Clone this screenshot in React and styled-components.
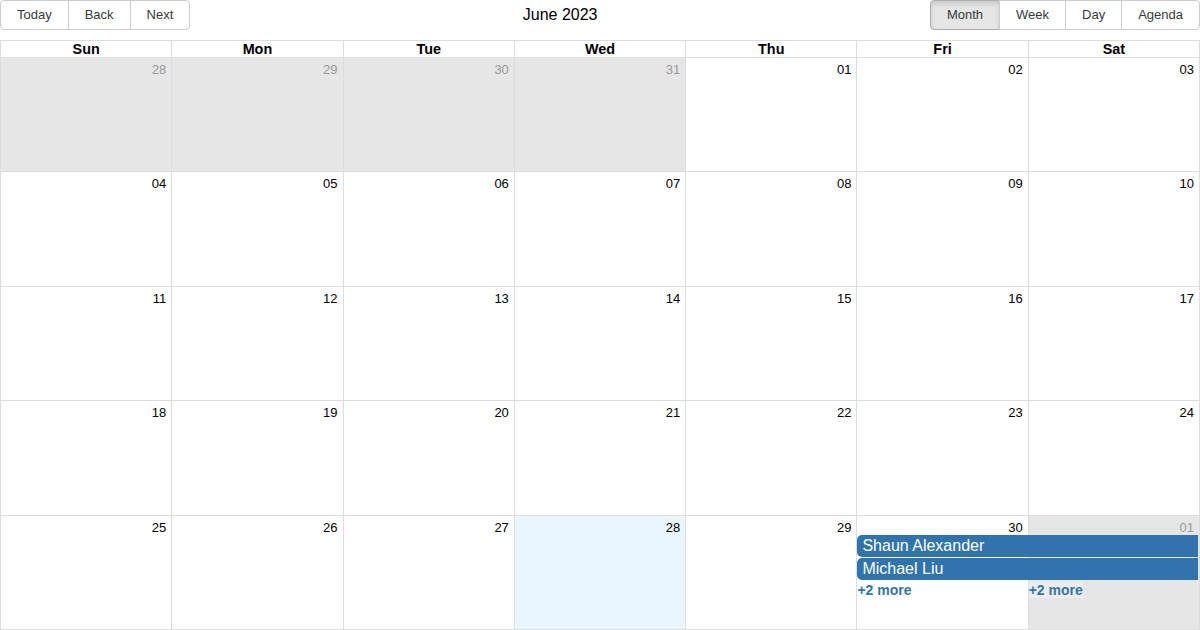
import React from "react";
import styled, { createGlobalStyle, css } from "styled-components";

const GlobalStyle = createGlobalStyle`
  html, body {
    margin: 0;
    padding: 0;
    background: #fff;
  }
  body {
    font-family: "Liberation Sans", Arial, Helvetica, sans-serif;
    font-size: 16px;
  }
  * { box-sizing: border-box; }
`;

const COLS = "calc((100% - 6px) / 7) repeat(6, calc((100% - 6px) / 7 + 1px))";

const Calendar = styled.div`
  height: 630px;
  display: flex;
  flex-direction: column;
  color: #000;
`;

const Toolbar = styled.div`
  display: flex;
  align-items: center;
  justify-content: center;
  margin-bottom: 10px;
  font-size: 16px;
`;

const ButtonGroup = styled.span`
  display: inline-block;
  white-space: nowrap;
`;

const ToolButton = styled.button`
  font-family: inherit;
  font-size: 13px;
  color: #373a3c;
  display: inline-block;
  margin: 0;
  text-align: center;
  vertical-align: middle;
  background: none;
  border: 1px solid #ccc;
  padding: 6px 16px;
  line-height: 16px;
  white-space: nowrap;
  border-radius: 0;
  cursor: pointer;

  & + & { margin-left: -1px; }
  &:first-child { border-radius: 4px 0 0 4px; }
  &:last-child { border-radius: 0 4px 4px 0; }

  ${(p) =>
    p.$active &&
    css`
      background-color: #e6e6e6;
      border-color: #adadad;
      box-shadow: inset 0 3px 5px rgba(0, 0, 0, 0.125);
    `}
`;

const Label = styled.span`
  flex-grow: 1;
  padding: 0 10px;
  text-align: center;
`;

const MonthView = styled.div`
  flex: 1;
  display: flex;
  flex-direction: column;
  border: 1px solid #ddd;
`;

const HeaderRow = styled.div`
  display: grid;
  grid-template-columns: ${COLS};
  border-bottom: 1px solid #ddd;
`;

const HeaderCell = styled.div`
  padding: 0 3px;
  text-align: center;
  font-weight: bold;
  font-size: 90%;
  line-height: 16px;
  white-space: nowrap;
  & + & { border-left: 1px solid #ddd; }
`;

const Week = styled.div`
  flex: 1 0 0;
  display: grid;
  grid-template-columns: ${COLS};
  grid-template-rows: auto auto auto auto 1fr;
  & + & { border-top: 1px solid #ddd; }
`;

const DayBg = styled.div`
  grid-row: 1 / -1;
  grid-column: ${(p) => p.$col};
  background: ${(p) => (p.$off ? "#e6e6e6" : p.$today ? "#eaf6ff" : "transparent")};
  border-left: ${(p) => (p.$col > 1 ? "1px solid #ddd" : "none")};
`;

const DateCell = styled.div`
  grid-row: 1;
  grid-column: ${(p) => p.$col};
  padding: 4px 5px 0 0;
  text-align: right;
  font-size: 13px;
  line-height: 15px;
  color: ${(p) => (p.$off ? "#999" : "#000")};
`;

const Segment = styled.div`
  grid-row: ${(p) => p.$row};
  grid-column: ${(p) => p.$col} / span ${(p) => p.$span || 1};
  padding: 0 1px 1px 1px;
  min-width: 0;
`;

const Event = styled.div`
  background: #3174ad;
  color: #fff;
  border-radius: ${(p) => (p.$continues ? "5px 0 0 5px" : "5px")};
  padding: 2px 5px;
  font-size: 16px;
  line-height: 18px;
  white-space: nowrap;
  overflow: hidden;
  text-overflow: ellipsis;
  cursor: pointer;
`;

const ShowMore = styled.a`
  display: inline-block;
  color: #3174ad;
  font-weight: bold;
  font-size: 14px;
  line-height: 16px;
  background-color: rgba(255, 255, 255, 0.3);
  cursor: pointer;
  margin-top: 1px;
`;

const DAYS = ["Sun", "Mon", "Tue", "Wed", "Thu", "Fri", "Sat"];

const pad = (n) => String(n).padStart(2, "0");

const weeks = [
  [28, 29, 30, 31].map((d) => ({ d, off: true })).concat([1, 2, 3].map((d) => ({ d }))),
  [4, 5, 6, 7, 8, 9, 10].map((d) => ({ d })),
  [11, 12, 13, 14, 15, 16, 17].map((d) => ({ d })),
  [18, 19, 20, 21, 22, 23, 24].map((d) => ({ d })),
  [25, 26, 27, 28, 29, 30].map((d) => ({ d, today: d === 28 })).concat([{ d: 1, off: true }]),
];

const lastWeekEvents = [
  { title: "Shaun Alexander", col: 6, span: 2 },
  { title: "Michael Liu", col: 6, span: 2 },
];

export default function App() {
  return (
    <>
      <GlobalStyle />
      <Calendar>
        <Toolbar>
          <ButtonGroup>
            <ToolButton>Today</ToolButton>
            <ToolButton>Back</ToolButton>
            <ToolButton>Next</ToolButton>
          </ButtonGroup>
          <Label>June 2023</Label>
          <ButtonGroup>
            <ToolButton $active>Month</ToolButton>
            <ToolButton>Week</ToolButton>
            <ToolButton>Day</ToolButton>
            <ToolButton>Agenda</ToolButton>
          </ButtonGroup>
        </Toolbar>

        <MonthView>
          <HeaderRow>
            {DAYS.map((d) => (
              <HeaderCell key={d}>{d}</HeaderCell>
            ))}
          </HeaderRow>

          {weeks.map((week, wi) => (
            <Week key={wi}>
              {week.map((day, i) => (
                <DayBg key={"bg" + i} $col={i + 1} $off={day.off} $today={day.today} />
              ))}
              {week.map((day, i) => (
                <DateCell key={"d" + i} $col={i + 1} $off={day.off}>
                  {pad(day.d)}
                </DateCell>
              ))}
              {wi === weeks.length - 1 && (
                <>
                  {lastWeekEvents.map((ev, ei) => (
                    <Segment key={ev.title} $row={ei + 2} $col={ev.col} $span={ev.span}>
                      <Event $continues>{ev.title}</Event>
                    </Segment>
                  ))}
                  <Segment $row={4} $col={6}>
                    <ShowMore>+2 more</ShowMore>
                  </Segment>
                  <Segment $row={4} $col={7}>
                    <ShowMore>+2 more</ShowMore>
                  </Segment>
                </>
              )}
            </Week>
          ))}
        </MonthView>
      </Calendar>
    </>
  );
}
